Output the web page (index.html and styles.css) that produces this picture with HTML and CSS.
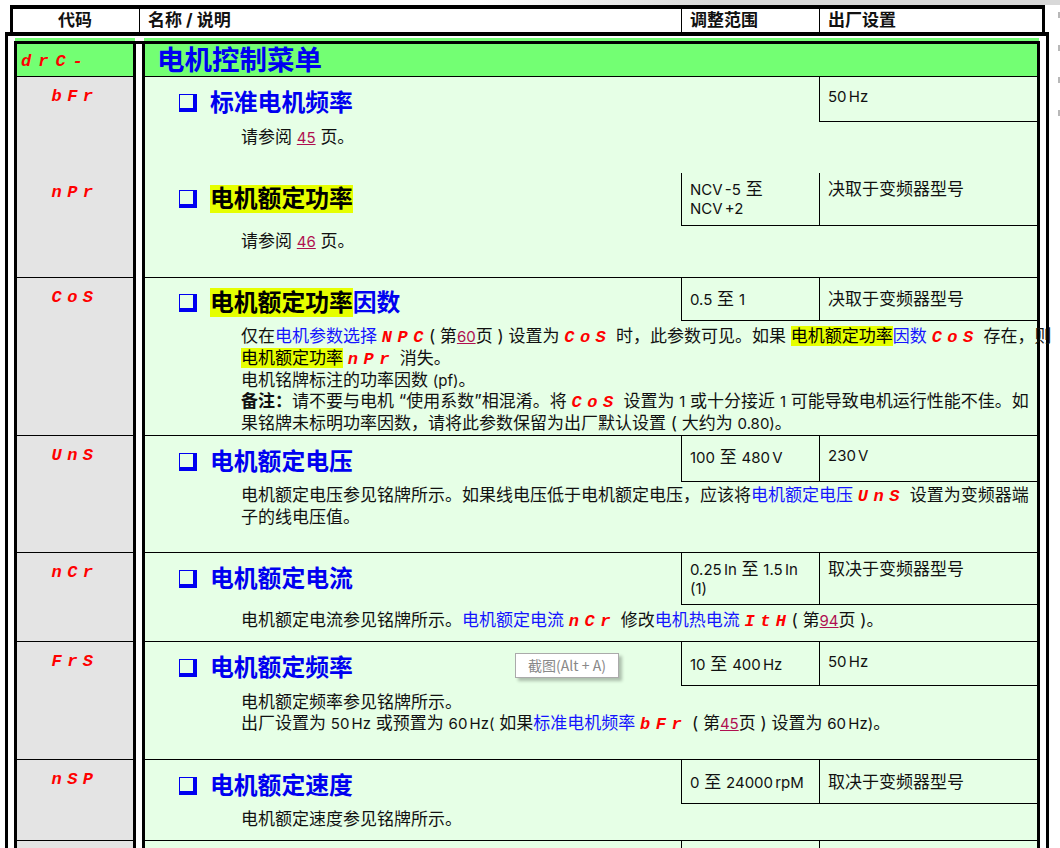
FILE: index.html
```html
<!DOCTYPE html>
<html lang="zh-CN">
  <head>
    <meta charset="UTF-8" />
    <link rel="stylesheet" href="styles.css">
  </head>

  <body>
    <div class="page">
      <div class="top-shade"></div>
      <i class="edge-mark edge-1"></i>
      <i class="edge-mark edge-2"></i>
      <i class="edge-mark edge-3"></i>
      <i class="edge-mark edge-4"></i>

      <div class="head">
        <div class="head-cell head-code">代码</div>
        <div class="head-cell">名称 / 说明</div>
        <div class="head-cell">调整范围</div>
        <div class="head-cell">出厂设置</div>
      </div>

      <div class="frame">
        <div class="strip">
          <div class="strip-code"></div>
          <div class="strip-body"></div>
        </div>

        <div class="table">
          <div class="row row-menu">
            <div class="code code-menu"><span class="seg">drC-</span></div>
            <div class="gutter"></div>
            <div class="body body-menu">电机控制菜单</div>
          </div>

          <!-- bFr and nPr share one row, no rule between them on the left -->
          <div class="row row-h201">
            <div class="code">
              <div class="seg seg-first">bFr</div>
              <div class="seg seg-second">nPr</div>
            </div>
            <div class="gutter"></div>
            <div class="body">
              <div class="param param-h96">
                <div class="param-head h45">
                  <div class="title"><i class="check"></i><span class="title-text">标准电机频率</span></div>
                  <div class="cell cell-empty"></div>
                  <div class="cell cell-default t10"><span class="n">50 Hz</span></div>
                </div>
                <div class="desc">请参阅 <a class="page-link">45</a> 页。</div>
              </div>
              <div class="param">
                <div class="param-head h53">
                  <div class="title"><i class="check"></i><span class="title-text hl">电机额定功率</span></div>
                  <div class="cell t7"><span class="n">NCV -5</span> 至<br><span class="n">NCV +2</span></div>
                  <div class="cell cell-default t7">决取于变频器型号</div>
                </div>
                <div class="desc">请参阅 <a class="page-link">46</a> 页。</div>
              </div>
            </div>
          </div>

          <div class="row row-h158">
            <div class="code"><div class="seg seg-first">CoS</div></div>
            <div class="gutter"></div>
            <div class="body">
              <div class="param">
                <div class="param-head h43">
                  <div class="title title-up"><i class="check"></i><span class="title-text"><span class="hl">电机额定功率</span>因数</span></div>
                  <div class="cell t12"><span class="n">0.5</span> 至 <span class="n">1</span></div>
                  <div class="cell cell-default t12">决取于变频器型号</div>
                </div>
                <div class="desc">
                  仅在<span class="term">电机参数选择</span> <span class="seg">NPC</span>( 第<a class="page-link">60</a>页 ) 设置为 <span class="seg">CoS</span> 时，此参数可见。如果 <span class="hl">电机额定功率</span><span class="term">因数</span> <span class="seg">CoS</span> 存在，则<br>
                  <span class="hl">电机额定功率</span> <span class="seg">nPr</span> 消失。<br>
                  电机铭牌标注的功率因数 <span class="n">(pf)</span>。<br>
                  <b>备注：</b>请不要与电机 “使用系数”相混淆。将 <span class="seg">CoS</span> 设置为 <span class="n">1</span> 或十分接近 <span class="n">1</span> 可能导致电机运行性能不佳。如<br>
                  果铭牌未标明功率因数，请将此参数保留为出厂默认设置 ( 大约为 <span class="n">0.80)</span>。
                </div>
              </div>
            </div>
          </div>

          <div class="row row-h117">
            <div class="code"><div class="seg seg-first">UnS</div></div>
            <div class="gutter"></div>
            <div class="body">
              <div class="param">
                <div class="param-head h46">
                  <div class="title"><i class="check"></i><span class="title-text">电机额定电压</span></div>
                  <div class="cell t12"><span class="n">100</span> 至 <span class="n">480 V</span></div>
                  <div class="cell cell-default t10"><span class="n">230 V</span></div>
                </div>
                <div class="desc desc-tight">
                  电机额定电压参见铭牌所示。如果线电压低于电机额定电压，应该将<span class="term">电机额定电压</span> <span class="seg">UnS</span> 设置为变频器端<br>
                  子的线电压值。
                </div>
              </div>
            </div>
          </div>

          <div class="row row-h89">
            <div class="code"><div class="seg seg-first">nCr</div></div>
            <div class="gutter"></div>
            <div class="body">
              <div class="param">
                <div class="param-head h52">
                  <div class="title"><i class="check"></i><span class="title-text">电机额定电流</span></div>
                  <div class="cell t7"><span class="n">0.25 In</span> 至 <span class="n">1.5 In</span><br><span class="n">(1)</span></div>
                  <div class="cell cell-default t7">取决于变频器型号</div>
                </div>
                <div class="desc">
                  电机额定电流参见铭牌所示。<span class="term">电机额定电流</span> <span class="seg">nCr</span> 修改<span class="term">电机热电流</span> <span class="seg">ItH</span>( 第<a class="page-link">94</a>页 )。
                </div>
              </div>
            </div>
          </div>

          <div class="row row-h118">
            <div class="code"><div class="seg seg-first">FrS</div></div>
            <div class="gutter"></div>
            <div class="body">
              <div class="param">
                <div class="param-head h44">
                  <div class="title"><i class="check"></i><span class="title-text">电机额定频率</span></div>
                  <div class="cell t13"><span class="n">10</span> 至 <span class="n">400 Hz</span></div>
                  <div class="cell cell-default t10"><span class="n">50 Hz</span></div>
                </div>
                <div class="desc desc-low">
                  电机额定频率参见铭牌所示。<br>
                  出厂设置为 <span class="n">50 Hz</span> 或预置为 <span class="n">60 Hz(</span> 如果<span class="term">标准电机频率</span> <span class="seg">bFr</span> ( 第<a class="page-link">45</a>页 ) 设置为 <span class="n">60 Hz)</span>。
                </div>
              </div>
            </div>
          </div>

          <div class="row row-h81">
            <div class="code"><div class="seg seg-first">nSP</div></div>
            <div class="gutter"></div>
            <div class="body">
              <div class="param">
                <div class="param-head h44">
                  <div class="title"><i class="check"></i><span class="title-text">电机额定速度</span></div>
                  <div class="cell t13"><span class="n">0</span> 至 <span class="n">24000 rpM</span></div>
                  <div class="cell cell-default t13">取决于变频器型号</div>
                </div>
                <div class="desc">电机额定速度参见铭牌所示。</div>
              </div>
            </div>
          </div>

          <div class="row row-h81">
            <div class="code"></div>
            <div class="gutter"></div>
            <div class="body">
              <div class="param">
                <div class="param-head h44">
                  <div class="title"></div>
                  <div class="cell"></div>
                  <div class="cell cell-default"></div>
                </div>
              </div>
            </div>
          </div>
        </div>
      </div>

      <div class="tooltip">截图(Alt + A)</div>
    </div>
  </body>
</html>
```

FILE: styles.css
```css
html,
body {
  margin: 0;
  background: white;
  overflow: hidden;
}
.page {
  position: relative;
  width: 1060px;
  height: 848px;
  overflow: hidden;
  padding-top: 5px;
  box-sizing: border-box;
  font-family: Inter, 'Noto Sans CJK SC', sans-serif;
  font-size: 17px;
  line-height: 21px;
  color: #111;
}
.top-shade {
  position: absolute;
  top: 0;
  left: 480px;
  right: 0;
  height: 5px;
  background: linear-gradient(90deg, white, #d8d8d8 40%, #d8d8d8);
}
.edge-mark {
  position: absolute;
  right: 0;
  width: 2px;
  height: 6px;
  background: #b8b8b8;
}
.edge-1 { top: 12px; }
.edge-2 { top: 45px; }
.edge-3 { top: 77px; }
.edge-4 { top: 110px; }

/* column heading box */
.head {
  display: grid;
  grid-template-columns: 126px 542px 138px 1fr;
  box-sizing: border-box;
  width: 1035px;
  height: 27px;
  margin-left: 10px;
  border: 3px solid black;
  border-top-width: 4px;
  border-bottom: 0;
  background: white;
  font-weight: 700;
  line-height: 23px;
}
.head-cell {
  padding-left: 8px;
  border-left: 1px solid black;
  white-space: nowrap;
}
.head-code {
  padding-left: 0;
  border-left: 0;
  padding-right: 2px;
  text-align: center;
}

/* outer frame */
.frame {
  box-sizing: border-box;
  width: 1044px;
  height: 900px;
  margin-left: 5px;
  padding-top: 2px;
  border: 3px solid black;
  border-top-width: 4px;
}
.strip {
  display: flex;
  height: 3px;
  padding-left: 7px;
}
.strip-code {
  width: 120px;
  background: #73ff73;
}
.strip-body {
  width: 895px;
  margin-left: 9px;
  background: #73ff73;
}
.table {
  box-sizing: border-box;
  width: 1026px;
  margin-left: 6px;
  border: 3px solid black;
  border-bottom: 0;
}

.row {
  display: flex;
}
.row-menu { height: 33px; }
.row-h201 { height: 201px; }
.row-h158 { height: 158px; }
.row-h117 { height: 117px; }
.row-h89 { height: 89px; }
.row-h118 { height: 118px; }
.row-h81 { height: 81px; }

.code {
  flex: none;
  box-sizing: border-box;
  width: 116px;
  border-bottom: 1px solid black;
  background: #e4e4e4;
  text-align: center;
}
.code-menu {
  padding: 6px 0 0 4px;
  background: #73ff73;
  text-align: left;
}
.gutter {
  flex: none;
  width: 6px;
  border: solid black;
  border-width: 0 3px;
  background: white;
}
.body {
  flex: 1;
  box-sizing: border-box;
  border-bottom: 1px solid black;
  background: #e6ffe6;
  min-width: 0;
}
.body-menu {
  padding-left: 12px;
  background: #73ff73;
  color: #0000f0;
  font-size: 27.5px;
  font-weight: 700;
  line-height: 32px;
}

/* red display codes */
.seg {
  font-family: 'Liberation Mono', monospace;
  font-size: 17px;
  font-style: italic;
  font-weight: 700;
  color: #ff0000;
  letter-spacing: 5.5px;
}
.seg-first {
  padding-top: 9px;
}
.seg-second {
  padding-top: 75px;
}
.code-menu .seg {
  letter-spacing: 7px;
}

/* one parameter: title + two value cells, text under it */
.param-h96 {
  height: 96px;
}
.param-head {
  display: flex;
}
.h43 { height: 43px; }
.h44 { height: 44px; }
.h45 { height: 45px; }
.h46 { height: 46px; }
.h52 { height: 52px; }
.h53 { height: 53px; }

.title {
  display: flex;
  flex: 1;
  align-items: center;
  height: 30px;
  padding: 11px 0 0 34px;
  font-size: 23.8px;
  font-weight: 700;
  color: #0000f0;
  white-space: nowrap;
}
.title-up {
  padding-top: 10px;
}
.title-text {
  margin-left: 13px;
  line-height: 28px;
}
.check {
  box-sizing: border-box;
  width: 18px;
  height: 18px;
  border: solid #0000f0;
  border-width: 1.5px 4px 4px 1.5px;
}
.hl {
  background: #e6ff00;
  color: black;
}

.cell {
  flex: none;
  box-sizing: border-box;
  width: 138px;
  padding-left: 8px;
  border-left: 1px solid black;
  border-bottom: 1px solid black;
  line-height: 19px;
  white-space: nowrap;
}
.cell-default {
  width: 218px;
}
.cell-empty {
  border: 0;
}
.t7 { padding-top: 7px; }
.t10 { padding-top: 10px; }
.t12 { padding-top: 12px; }
.t13 { padding-top: 13px; }

.n {
  font-size: 15px;
  word-spacing: -2px;
}

.desc {
  padding: 5px 0 0 96px;
  white-space: nowrap;
}
.desc-tight {
  padding-top: 3px;
}
.desc-low {
  padding-top: 6px;
}
.term {
  color: #1414ff;
}
.page-link {
  font-size: 15px;
  color: #b01050;
  text-decoration: underline;
}

.tooltip {
  position: absolute;
  left: 515px;
  top: 653px;
  box-sizing: border-box;
  width: 104px;
  height: 25px;
  border: 1px solid #aaa;
  background: white;
  box-shadow: 3px 3px 3px rgba(0, 0, 0, 0.25);
  font-family: 'Noto Sans CJK SC', sans-serif;
  font-size: 14px;
  line-height: 23px;
  color: #888;
  text-align: center;
  white-space: nowrap;
}
```
